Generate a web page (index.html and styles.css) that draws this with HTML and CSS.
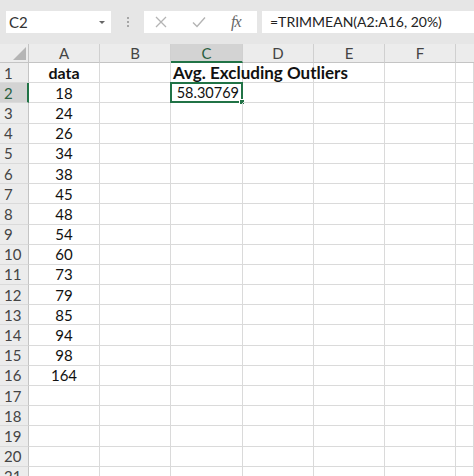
FILE: index.html
```html
<!DOCTYPE html>
<html>
<head>
<meta charset="utf-8">
<link rel="stylesheet" href="styles.css">
</head>
<body>
<div class="fbar">
  <div class="namebox"><span class="nb-text">C2</span><span class="nb-arrow"></span></div>
  <div class="dots"><i></i><i></i><i></i></div>
  <div class="iconbox">
    <svg class="ic-x" width="12" height="12" viewBox="0 0 12 12"><path d="M1 1L11 11M11 1L1 11" stroke="#b4b4b4" stroke-width="1.3" fill="none"/></svg>
    <svg class="ic-check" width="14" height="12" viewBox="0 0 14 12"><path d="M1 6.5L5 10.5L13 1.5" stroke="#b4b4b4" stroke-width="1.4" fill="none"/></svg>
    <span class="ic-fx">fx</span>
  </div>
  <div class="formula">=TRIMMEAN(A2:A16, 20%)</div>
</div>
<div class="sheet">
  <div class="hd corner"><span class="tri"></span></div>
  <div class="hd col">A</div><div class="hd col">B</div><div class="hd col sel">C</div><div class="hd col">D</div><div class="hd col">E</div><div class="hd col">F</div><div class="hd col last"></div>

  <div class="hd row">1</div><div class="c ctr b">data</div><div class="c"></div><div class="c"><span class="over b">Avg. Excluding Outliers</span></div><div class="c"></div><div class="c"></div><div class="c"></div><div class="c"></div>
  <div class="hd row rsel">2</div><div class="c ctr">18</div><div class="c"></div><div class="c active">58.30769<span class="handle"></span></div><div class="c"></div><div class="c"></div><div class="c"></div><div class="c"></div>
  <div class="hd row">3</div><div class="c ctr">24</div><div class="c"></div><div class="c"></div><div class="c"></div><div class="c"></div><div class="c"></div><div class="c"></div>
  <div class="hd row">4</div><div class="c ctr">26</div><div class="c"></div><div class="c"></div><div class="c"></div><div class="c"></div><div class="c"></div><div class="c"></div>
  <div class="hd row">5</div><div class="c ctr">34</div><div class="c"></div><div class="c"></div><div class="c"></div><div class="c"></div><div class="c"></div><div class="c"></div>
  <div class="hd row">6</div><div class="c ctr">38</div><div class="c"></div><div class="c"></div><div class="c"></div><div class="c"></div><div class="c"></div><div class="c"></div>
  <div class="hd row">7</div><div class="c ctr">45</div><div class="c"></div><div class="c"></div><div class="c"></div><div class="c"></div><div class="c"></div><div class="c"></div>
  <div class="hd row">8</div><div class="c ctr">48</div><div class="c"></div><div class="c"></div><div class="c"></div><div class="c"></div><div class="c"></div><div class="c"></div>
  <div class="hd row">9</div><div class="c ctr">54</div><div class="c"></div><div class="c"></div><div class="c"></div><div class="c"></div><div class="c"></div><div class="c"></div>
  <div class="hd row">10</div><div class="c ctr">60</div><div class="c"></div><div class="c"></div><div class="c"></div><div class="c"></div><div class="c"></div><div class="c"></div>
  <div class="hd row">11</div><div class="c ctr">73</div><div class="c"></div><div class="c"></div><div class="c"></div><div class="c"></div><div class="c"></div><div class="c"></div>
  <div class="hd row">12</div><div class="c ctr">79</div><div class="c"></div><div class="c"></div><div class="c"></div><div class="c"></div><div class="c"></div><div class="c"></div>
  <div class="hd row">13</div><div class="c ctr">85</div><div class="c"></div><div class="c"></div><div class="c"></div><div class="c"></div><div class="c"></div><div class="c"></div>
  <div class="hd row">14</div><div class="c ctr">94</div><div class="c"></div><div class="c"></div><div class="c"></div><div class="c"></div><div class="c"></div><div class="c"></div>
  <div class="hd row">15</div><div class="c ctr">98</div><div class="c"></div><div class="c"></div><div class="c"></div><div class="c"></div><div class="c"></div><div class="c"></div>
  <div class="hd row">16</div><div class="c ctr">164</div><div class="c"></div><div class="c"></div><div class="c"></div><div class="c"></div><div class="c"></div><div class="c"></div>
  <div class="hd row">17</div><div class="c"></div><div class="c"></div><div class="c"></div><div class="c"></div><div class="c"></div><div class="c"></div><div class="c"></div>
  <div class="hd row">18</div><div class="c"></div><div class="c"></div><div class="c"></div><div class="c"></div><div class="c"></div><div class="c"></div><div class="c"></div>
  <div class="hd row">19</div><div class="c"></div><div class="c"></div><div class="c"></div><div class="c"></div><div class="c"></div><div class="c"></div><div class="c"></div>
  <div class="hd row">20</div><div class="c"></div><div class="c"></div><div class="c"></div><div class="c"></div><div class="c"></div><div class="c"></div><div class="c"></div>
  <div class="hd row">21</div><div class="c"></div><div class="c"></div><div class="c"></div><div class="c"></div><div class="c"></div><div class="c"></div><div class="c"></div>
</div>
</body>
</html>
```

FILE: styles.css
```css
* { box-sizing: border-box; }
html, body { margin: 0; padding: 0; background: #fff; overflow: hidden; }
body {
  width: 474px;
  height: 476px;
  font-family: Lato, "Open Sans", sans-serif;
  color: #1a1a1a;
}

.fbar {
  height: 44px;
  background: #e6e6e6;
  display: flex;
  align-items: flex-start;
  padding: 11px 0 0 6px;
}
.namebox {
  width: 105px;
  height: 22px;
  background: #fff;
  display: flex;
  align-items: center;
  justify-content: space-between;
  padding: 0 6px 0 3px;
}
.nb-text { font-size: 15px; color: #333; }
.nb-arrow {
  width: 0; height: 0;
  border-left: 3px solid transparent;
  border-right: 3px solid transparent;
  border-top: 3px solid #666;
}
.dots {
  width: 33px;
  height: 22px;
  display: flex;
  flex-direction: column;
  align-items: center;
  justify-content: center;
  gap: 2px;
}
.dots i { width: 2px; height: 2px; background: #a6a6a6; display: block; }
.iconbox {
  width: 113px;
  height: 22px;
  background: #fff;
  display: flex;
  align-items: center;
  padding-left: 11px;
}
.ic-x { margin-right: 25px; }
.ic-check { margin-right: 25px; }
.ic-fx {
  font-family: "Liberation Serif", serif;
  font-style: italic;
  font-size: 16px;
  color: #666;
  letter-spacing: -1px;
}
.formula {
  margin-left: 5px;
  flex: 1;
  height: 22px;
  background: #fff;
  font-size: 14px;
  color: #222;
  line-height: 22px;
  padding-left: 8px;
  white-space: nowrap;
}

.sheet {
  display: grid;
  grid-template-columns: 29px 71px 71px 72px 71px 71px 71px 1fr;
  grid-template-rows: 19px repeat(21, 20.2px);
  background: #fff;
}
.hd {
  background: #ececec;
  color: #444;
  font-size: 15px;
  display: flex;
  align-items: center;
  justify-content: center;
  border-right: 1px solid #d0d0d0;
  border-bottom: 1px solid #c4c4c4;
}
.corner { position: relative; border-right: 1px solid #c4c4c4; }
.tri {
  position: absolute;
  right: 2px;
  bottom: 2px;
  width: 0; height: 0;
  border-left: 13px solid transparent;
  border-bottom: 13px solid #b5b5b5;
}
.col.sel {
  background: #d3d3d3;
  color: #2b5f41;
  border-bottom: 2px solid #217346;
}
.col.last { border-right: none; }
.row {
  border-right: 1px solid #c4c4c4;
  border-bottom: 1px solid #dadada;
  justify-content: flex-start;
  padding-left: 4px;
}
.row.rsel {
  background: #d3d3d3;
  color: #2b5f41;
  border-right: 2px solid #217346;
}
.c {
  border-right: 1px solid #dadada;
  border-bottom: 1px solid #dadada;
  font-size: 15px;
  color: #111;
  display: flex;
  align-items: center;
  justify-content: flex-end;
  padding: 0 2px;
  white-space: nowrap;
  position: relative;
}
.c.ctr { justify-content: center; padding: 0; }
.c.ctr.b { font-size: 16px; }
.b { font-weight: 700; }
.over {
  position: absolute;
  left: 2px;
  top: 0;
  bottom: 0;
  display: flex;
  align-items: center;
  font-size: 17px;
  z-index: 2;
}
.active {
  border: 2px solid #217346;
  margin: -1px 0 0 -1px;
  width: calc(100% + 1px);
  height: calc(100% + 1px);
  font-size: 14.5px;
}
.handle {
  position: absolute;
  right: -4px;
  bottom: -4px;
  width: 6px;
  height: 6px;
  background: #217346;
  border: 1px solid #fff;
}
```
